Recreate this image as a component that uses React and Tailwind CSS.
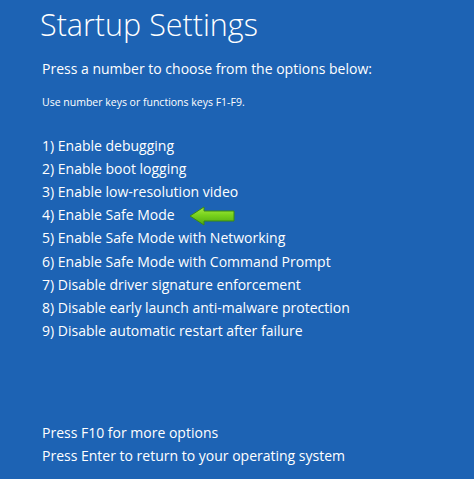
const options = [
    "1) Enable debugging",
    "2) Enable boot logging",
    "3) Enable low-resolution video",
    "4) Enable Safe Mode",
    "5) Enable Safe Mode with Networking",
    "6) Enable Safe Mode with Command Prompt",
    "7) Disable driver signature enforcement",
    "8) Disable early launch anti-malware protection",
    "9) Disable automatic restart after failure"
];

function Arrow() {
    return (
        <svg width="47" height="20" viewBox="0 0 47 20" className="ml-[14px] mt-[3px]">
            <defs>
                <linearGradient id="g" x1="0" y1="0" x2="0" y2="1">
                    <stop offset="0" stopColor="#a6ea45" />
                    <stop offset="0.45" stopColor="#78d21c" />
                    <stop offset="1" stopColor="#4fa812" />
                </linearGradient>
            </defs>
            <path d="M1 10 L15 1 L15 5 L45 5 L45 15 L15 15 L15 19 Z" fill="url(#g)" stroke="#3b8a10" strokeWidth="1" strokeLinejoin="round" />
        </svg>
    );
}

export default function App() {
    return (
        <div className="w-[474px] h-[479px] bg-[#1d63b4] text-white flex flex-col pl-[40px] font-['Open_Sans',sans-serif] overflow-hidden">

            <h1 className="text-[30.5px] font-light leading-none mt-[9px]">
                Startup Settings
            </h1>

            <p className="text-[14px] leading-none mt-[22px] ml-[2px]">
                Press a number to choose from the options below:
            </p>

            <p className="text-[10.5px] leading-none mt-[21px] ml-[2px]">
                Use number keys or functions keys F1-F9.
            </p>

            <div className="flex flex-col mt-[27px] ml-[2px]">
                {options.map((o, i) => (
                    <div key={i} className="flex items-center h-[23.1px] text-[14px]">
                        {o}
                        {i === 3 && <Arrow />}
                    </div>
                ))}
            </div>

            <div className="flex flex-col mt-auto mb-[12px] ml-[2px] text-[14px]">
                <div className="h-[23px] flex items-center">Press F10 for more options</div>
                <div className="h-[23px] flex items-center">Press Enter to return to your operating system</div>
            </div>

        </div>
    );
}
